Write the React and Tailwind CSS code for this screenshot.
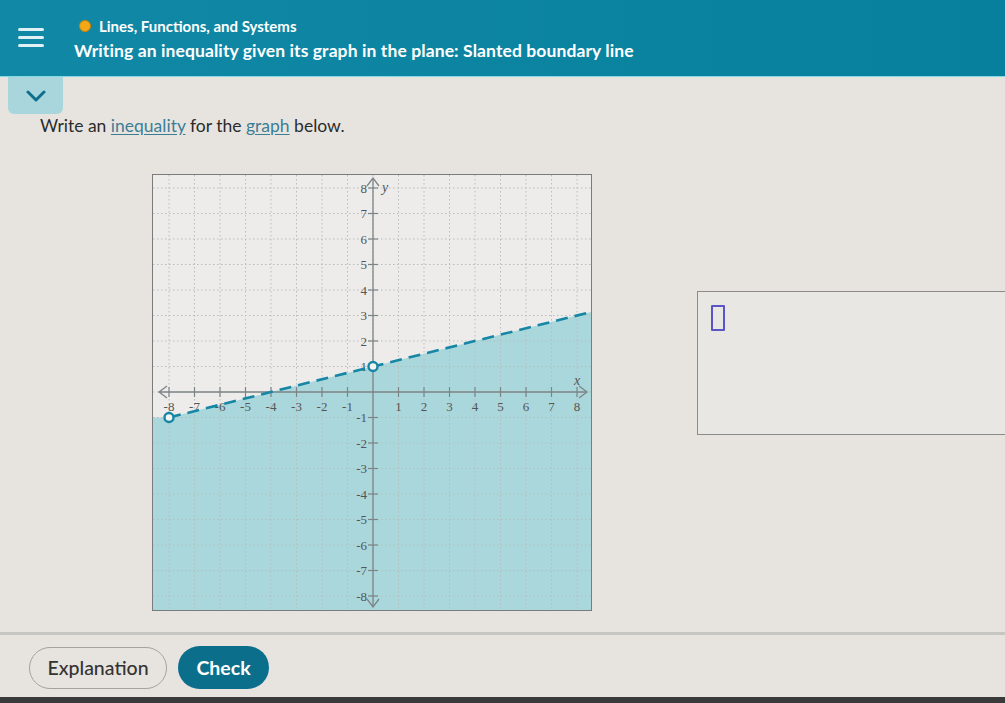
import React from 'react';

const U = 25.5;
const OX = 220;
const OY = 217;
const W = 438;
const H = 435;
const px = (x) => OX + x * U;
const py = (y) => OY - y * U;
const ticks = [-8, -7, -6, -5, -4, -3, -2, -1, 1, 2, 3, 4, 5, 6, 7, 8];
const all = [-8, -7, -6, -5, -4, -3, -2, -1, 0, 1, 2, 3, 4, 5, 6, 7, 8];

function Graph() {
    const xl = -OX / U;
    const xr = (W - OX) / U;
    const lineY = (x) => x / 4 + 1;
    const shade = `M0 ${py(lineY(-8))} L${px(-8)} ${py(lineY(-8))} L${W} ${py(lineY(xr))} L${W} ${H} L0 ${H} Z`;
    return (
        <svg width={W} height={H} className="block" style={{ fontFamily: '"Liberation Serif", serif' }}>
            <path d={shade} fill="#aad7db" />
            {/* grid */}
            {all.map((v) => (
                <g key={v}>
                    <line x1={px(v)} y1={0} x2={px(v)} y2={H} stroke="#b9bcbc" strokeWidth="1" strokeDasharray="1.5 2.5" />
                    <line x1={0} y1={py(v)} x2={W} y2={py(v)} stroke="#b9bcbc" strokeWidth="1" strokeDasharray="1.5 2.5" />
                </g>
            ))}
            {/* axes */}
            <line x1={6} y1={OY} x2={W - 4} y2={OY} stroke="#7c8486" strokeWidth="1.3" />
            <line x1={OX} y1={3} x2={OX} y2={H - 3} stroke="#7c8486" strokeWidth="1.3" />
            <path d={`M${14} ${OY - 6} L6 ${OY} L${14} ${OY + 6}`} fill="none" stroke="#7c8486" strokeWidth="1.3" />
            <path d={`M${W - 12} ${OY - 6} L${W - 4} ${OY} L${W - 12} ${OY + 6}`} fill="none" stroke="#7c8486" strokeWidth="1.3" />
            <path d={`M${OX - 6} 11 L${OX} 3 L${OX + 6} 11`} fill="none" stroke="#7c8486" strokeWidth="1.3" />
            <path d={`M${OX - 6} ${H - 11} L${OX} ${H - 3} L${OX + 6} ${H - 11}`} fill="none" stroke="#7c8486" strokeWidth="1.3" />
            {ticks.map((v) => (
                <g key={'t' + v}>
                    <line x1={px(v)} y1={OY - 5} x2={px(v)} y2={OY + 5} stroke="#7c8486" strokeWidth="1.2" />
                    <line x1={OX - 5} y1={py(v)} x2={OX + 5} y2={py(v)} stroke="#7c8486" strokeWidth="1.2" />
                    <text x={px(v)} y={OY + 19} fontSize="13" fill="#555" textAnchor="middle">{v}</text>
                    <text x={OX - 6} y={py(v) + 4.5} fontSize="13" fill="#555" textAnchor="end">{v}</text>
                </g>
            ))}
            <text x={OX + 9} y={17} fontSize="14" fontStyle="italic" fill="#555">y</text>
            <text x={W - 17} y={OY - 7} fontSize="14" fontStyle="italic" fill="#555">x</text>
            {/* boundary */}
            <line x1={px(-8)} y1={py(-1)} x2={W} y2={py(lineY(xr))} stroke="#1686a5" strokeWidth="2.6" strokeDasharray="12 7" />
            <circle cx={px(0)} cy={py(1)} r="4.5" fill="#f3f3f2" stroke="#1686a5" strokeWidth="2.4" />
            <circle cx={px(-8)} cy={py(-1)} r="4.5" fill="#f3f3f2" stroke="#1686a5" strokeWidth="2.4" />
        </svg>
    );
}

export default function App() {
    return (
        <div className="w-[1005px] h-[703px] overflow-hidden bg-[#e7e4e0] flex flex-col" style={{ fontFamily: 'Lato, "Open Sans", sans-serif' }}>
            {/* Header */}
            <div className="h-[77px] shrink-0 bg-gradient-to-r from-[#1189a6] to-[#06809c] flex items-center border-b border-[#86d8e6]">
                <div className="w-[74px] shrink-0 flex flex-col gap-[5px] pl-[18px] -mt-[2px]">
                    <span className="block w-[26px] h-[3px] rounded bg-[#dff1f4]"></span>
                    <span className="block w-[26px] h-[3px] rounded bg-[#dff1f4]"></span>
                    <span className="block w-[26px] h-[3px] rounded bg-[#dff1f4]"></span>
                </div>
                <div className="flex flex-col mt-[2px]">
                    <div className="flex items-center gap-[8px] pl-[5px]">
                        <span className="w-[12px] h-[12px] rounded-full bg-[#f4a817] border border-[#c88207]"></span>
                        <span className="text-[15px] font-bold text-white leading-[20px]">Lines, Functions, and Systems</span>
                    </div>
                    <div className="mt-[4px] text-[17.5px] font-bold text-white leading-[22px] tracking-[0.1px]">Writing an inequality given its graph in the plane: Slanted boundary line</div>
                </div>
            </div>

            {/* Tab */}
            <div className="ml-[8px] w-[55px] h-[37px] rounded-b-md bg-[#a9d6dc] flex items-center justify-center">
                <svg width="20" height="12" viewBox="0 0 20 12">
                    <path d="M2 2 L10 10 L18 2" fill="none" stroke="#0d6f8c" strokeWidth="3" strokeLinecap="round" strokeLinejoin="round" />
                </svg>
            </div>

            <div className="ml-[40px] mt-[1px] text-[17.5px] leading-[22px] text-[#2b2b2b]">
                Write an <span className="text-[#3c7d96] underline underline-offset-2">inequality</span> for the <span className="text-[#3c7d96] underline underline-offset-2">graph</span> below.
            </div>

            {/* Graph + answer */}
            <div className="flex items-start mt-[37px]">
                <div className="ml-[152px] border-[1.5px] border-[#7a7c7c] bg-[#eeeceb]">
                    <Graph />
                </div>
                <div className="ml-[105px] mt-[117px] w-[330px] h-[144px] shrink-0 border-[1.5px] border-[#8b8b8b] bg-[#e9e7e4] p-[13px]">
                    <div className="w-[14px] h-[26px] border-2 border-[#5a55c6] rounded-[1px]"></div>
                </div>
            </div>

            {/* Footer */}
            <div className="mt-[21px] h-[3px] bg-[#c6c6c3]"></div>
            <div className="flex items-center gap-[11px] pl-[29px] mt-[11px]">
                <button className="w-[138px] h-[42px] rounded-full border-[1.5px] border-[#a3a3a2] text-[19.5px] text-[#333] font-medium">Explanation</button>
                <button className="w-[91px] h-[43px] rounded-full bg-[#0b6f8c] text-[19.5px] text-white font-bold">Check</button>
            </div>
            <div className="mt-auto h-[6px] bg-[#3a3a3a]"></div>
        </div>
    );
}
